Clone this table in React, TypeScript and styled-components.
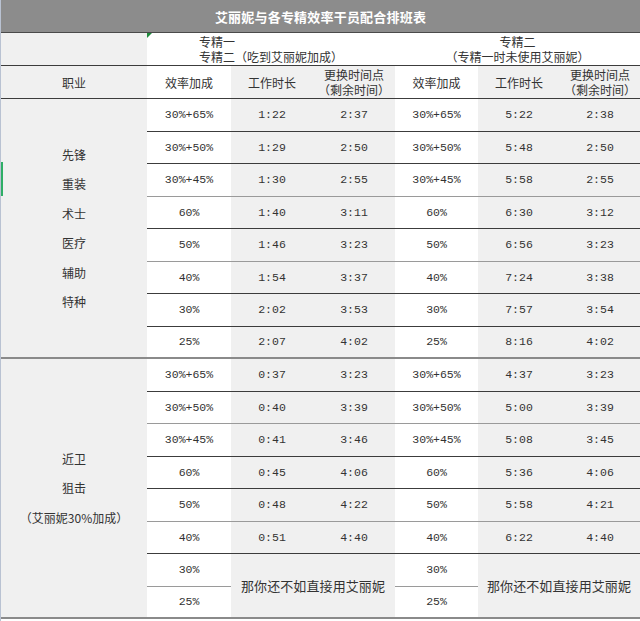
import React from 'react';
import styled, { createGlobalStyle } from 'styled-components';

const GlobalStyle = createGlobalStyle`
  html, body {
    margin: 0;
    padding: 0;
    background: #fff;
  }
  body {
    font-family: "Noto Sans CJK SC", "Noto Sans", sans-serif;
    color: #333;
  }
`;

const Sheet = styled.div`
  position: relative;
  width: 640px;
  height: 621px;
  overflow: hidden;
  background: #fff;
  border-left: 1px solid #b9c2d2;
  box-sizing: border-box;
`;

const Grid = styled.div`
  display: grid;
  grid-template-columns: 146px 84px 82px 82px 83px 82px 80px;
  grid-template-rows: 33px 33px 33px repeat(16, 32.5px);
`;

const Title = styled.div`
  grid-column: 1 / -1;
  display: flex;
  align-items: center;
  justify-content: center;
  background: #8c8c8c;
  color: #fff;
  font-size: 13px;
  font-weight: 700;
  letter-spacing: 0.2px;
  border-bottom: 1px solid #4a4a4a;
  box-sizing: border-box;
`;

type Tone = 'dark' | 'light' | 'group' | 'none';

const lineColor: Record<Tone, string> = {
  dark: '1px solid #3c3c3c',
  light: '1px solid #9a9a9a',
  group: '2px solid #8a8a8a',
  none: '0',
};

const Cell = styled.div<{ $bg?: 'white' | 'gray'; $line?: Tone; $span?: number; $rows?: number }>`
  display: flex;
  align-items: center;
  justify-content: center;
  box-sizing: border-box;
  background: ${(p) => (p.$bg === 'gray' ? '#f0f0f0' : '#fff')};
  border-bottom: ${(p) => lineColor[p.$line ?? 'dark']};
  grid-column: ${(p) => (p.$span ? `span ${p.$span}` : 'auto')};
  grid-row: ${(p) => (p.$rows ? `span ${p.$rows}` : 'auto')};
  font-size: 12px;
  line-height: 15px;
  text-align: center;
  position: relative;
`;

const Num = styled.span`
  font-family: "Liberation Mono", "DejaVu Sans Mono", monospace;
  font-size: 11.5px;
  color: #333;
`;

const Stacked = styled.div<{ $align?: 'left' | 'center' }>`
  display: flex;
  flex-direction: column;
  align-items: ${(p) => (p.$align === 'left' ? 'flex-start' : 'center')};
  line-height: 15px;
  font-size: 12px;

  span {
    display: block;
    height: 15px;
  }
`;

const GroupLabel = styled.div`
  grid-column: 1;
  grid-row: span 8;
  display: flex;
  flex-direction: column;
  align-items: center;
  justify-content: center;
  background: #f0f0f0;
  border-bottom: 2px solid #8a8a8a;
  box-sizing: border-box;
  font-size: 12px;
  line-height: 29.5px;
`;

const Note = styled.span`
  font-size: 13px;
  letter-spacing: 0.1px;
`;

const CommentMark = styled.span`
  position: absolute;
  top: 0;
  left: 0;
  width: 0;
  height: 0;
  border-top: 5px solid #1f8a3c;
  border-right: 5px solid transparent;
`;

const RowMarker = styled.div`
  position: absolute;
  left: 0;
  top: 162px;
  width: 2px;
  height: 34px;
  background: #2fae66;
  z-index: 2;
`;

const groupOne: string[][] = [
  ['30%+65%', '1:22', '2:37', '30%+65%', '5:22', '2:38'],
  ['30%+50%', '1:29', '2:50', '30%+50%', '5:48', '2:50'],
  ['30%+45%', '1:30', '2:55', '30%+45%', '5:58', '2:55'],
  ['60%', '1:40', '3:11', '60%', '6:30', '3:12'],
  ['50%', '1:46', '3:23', '50%', '6:56', '3:23'],
  ['40%', '1:54', '3:37', '40%', '7:24', '3:38'],
  ['30%', '2:02', '3:53', '30%', '7:57', '3:54'],
  ['25%', '2:07', '4:02', '25%', '8:16', '4:02'],
];

const groupTwo: string[][] = [
  ['30%+65%', '0:37', '3:23', '30%+65%', '4:37', '3:23'],
  ['30%+50%', '0:40', '3:39', '30%+50%', '5:00', '3:39'],
  ['30%+45%', '0:41', '3:46', '30%+45%', '5:08', '3:45'],
  ['60%', '0:45', '4:06', '60%', '5:36', '4:06'],
  ['50%', '0:48', '4:22', '50%', '5:58', '4:21'],
  ['40%', '0:51', '4:40', '40%', '6:22', '4:40'],
];

const colBg: ('white' | 'gray')[] = ['white', 'gray', 'gray', 'white', 'gray', 'gray'];

function rowTone(i: number, last: number, light: number[]): Tone {
  if (i === last) return 'group';
  return light.includes(i) ? 'light' : 'dark';
}

function DataRow({ values, tone }: { values: string[]; tone: Tone }) {
  return (
    <>
      {values.map((v, i) => (
        <Cell key={i} $bg={colBg[i]} $line={tone}>
          <Num>{v}</Num>
        </Cell>
      ))}
    </>
  );
}

export default function App(): JSX.Element {
  const advice = '那你还不如直接用艾丽妮';
  return (
    <Sheet>
      <GlobalStyle />
      <RowMarker />
      <Grid>
        <Title>艾丽妮与各专精效率干员配合排班表</Title>

        <Cell $bg="gray" />
        <Cell $span={3}>
          <CommentMark />
          <Stacked $align="left">
            <span>专精一</span>
            <span>专精二（吃到艾丽妮加成）</span>
          </Stacked>
        </Cell>
        <Cell $span={3}>
          <Stacked>
            <span>专精二</span>
            <span>（专精一时未使用艾丽妮）</span>
          </Stacked>
        </Cell>

        <Cell $bg="gray">职业</Cell>
        {[0, 1].map((k) => (
          <React.Fragment key={k}>
            <Cell>效率加成</Cell>
            <Cell $bg="gray">工作时长</Cell>
            <Cell $bg="gray">
              <Stacked>
                <span>更换时间点</span>
                <span>（剩余时间）</span>
              </Stacked>
            </Cell>
          </React.Fragment>
        ))}

        <GroupLabel>
          <span>先锋</span>
          <span>重装</span>
          <span>术士</span>
          <span>医疗</span>
          <span>辅助</span>
          <span>特种</span>
        </GroupLabel>
        {groupOne.map((r, i) => (
          <DataRow key={i} values={r} tone={rowTone(i, 7, [2, 4])} />
        ))}

        <GroupLabel>
          <span>近卫</span>
          <span>狙击</span>
          <span>（艾丽妮30%加成）</span>
        </GroupLabel>
        {groupTwo.map((r, i) => (
          <DataRow key={i} values={r} tone={rowTone(i, -1, [1, 4])} />
        ))}

        <Cell $line="light">
          <Num>30%</Num>
        </Cell>
        <Cell $bg="gray" $span={2} $rows={2} $line="group">
          <Note>{advice}</Note>
        </Cell>
        <Cell $line="light">
          <Num>30%</Num>
        </Cell>
        <Cell $bg="gray" $span={2} $rows={2} $line="group">
          <Note>{advice}</Note>
        </Cell>
        <Cell $line="group">
          <Num>25%</Num>
        </Cell>
        <Cell $line="group">
          <Num>25%</Num>
        </Cell>
      </Grid>
    </Sheet>
  );
}
